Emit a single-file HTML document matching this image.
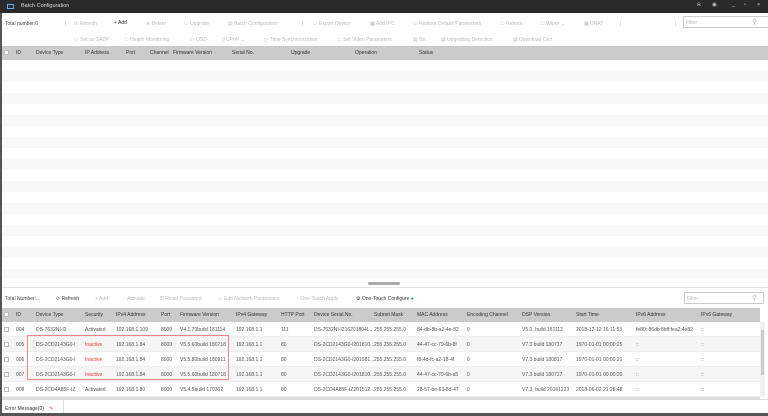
<!DOCTYPE html>
<html><head><meta charset="utf-8"><style>
*{margin:0;padding:0;box-sizing:border-box}
body{width:768px;height:416px;overflow:hidden;background:#fff;font-family:"Liberation Sans",sans-serif;font-size:5px;color:#444;position:relative}
.a{position:absolute;white-space:nowrap}
.g{color:#bbb}
.title{left:0;top:0;width:768px;height:13px;background:#2a2a2a;color:#ddd;font-size:5.5px}
.hdr{background:#cbcbcb;height:14px}
.cb{position:absolute;width:5px;height:5px;border:1px solid #bbb;background:#fff}
</style></head><body>
<div class="a title"><div class="a" style="left:7px;top:4px;width:7px;height:5px;border:1px solid #6af"></div><span class="a" style="left:21px;top:3px">Batch Configuration</span>
<span class="a" style="left:697px;top:2px;color:#ccc">⍾</span><span class="a" style="left:712px;top:2px;color:#ccc">◉</span><span class="a" style="left:732px;top:2px;color:#ccc">_</span><span class="a" style="left:744px;top:2px;color:#ccc">▫</span><span class="a" style="left:757px;top:2px;color:#ccc">×</span></div>
<div class="a" style="left:0;top:13px;width:2px;height:403px;background:#555"></div>
<span class="a" style="left:5px;top:21px">Total number:0</span>
<span class="a g" style="left:65px;top:21px">|</span>
<span class="a g" style="left:74px;top:21px">⟳ Refresh</span>
<span class="a" style="left:114px;top:20px;color:#333">+ Add</span>
<span class="a g" style="left:146px;top:21px">✕ Delete</span>
<span class="a g" style="left:184px;top:21px">▭ Upgrade</span>
<span class="a g" style="left:228px;top:21px">▤ Batch Configuration</span>
<span class="a g" style="left:302px;top:21px">|</span>
<span class="a g" style="left:313px;top:21px">▭ Export Device</span>
<span class="a g" style="left:370px;top:21px">▦ Add IPC</span>
<span class="a g" style="left:413px;top:21px">▭ Restore Default Parameters</span>
<span class="a g" style="left:500px;top:21px">▭ Reboot</span>
<span class="a g" style="left:540px;top:21px">▭ Wiper ⌄</span>
<span class="a g" style="left:584px;top:21px">▦ DNAT</span>
<span class="a g" style="left:620px;top:21px">|</span><span class="a g" style="left:675px;top:21px">|</span>
<div class="a" style="left:683px;top:16px;width:96px;height:12px;border:1px solid #ccc"></div>
<span class="a g" style="left:686px;top:20px">Filter</span><span class="a g" style="left:752px;top:18px;font-size:7px">⚲</span>
<span class="a g" style="left:74px;top:37px">▭ Set as SADP</span>
<span class="a g" style="left:124px;top:37px">▭ Health Monitoring</span>
<span class="a g" style="left:190px;top:37px">▭ OSD</span>
<span class="a g" style="left:222px;top:37px">▯ UPnP ⌄</span>
<span class="a g" style="left:264px;top:37px">◷ Time Synchronization</span>
<span class="a g" style="left:337px;top:37px">▭ Set Video Parameters</span>
<span class="a g" style="left:413px;top:37px">▤ 8ix</span>
<span class="a g" style="left:441px;top:37px">▤ Upgrading Detection</span>
<span class="a g" style="left:513px;top:37px">▤ Download Cert</span>
<div class="a hdr" style="left:2px;top:46px;width:766px"></div>
<div class="cb" style="left:4px;top:50px"></div>
<div class="a" style="top:50px;left:0;width:768px;color:#333">
<span class="a" style="left:16px">ID</span><span class="a" style="left:36px">Device Type</span><span class="a" style="left:85px">IP Address</span><span class="a" style="left:126px">Port</span><span class="a" style="left:150px">Channel</span><span class="a" style="left:173px">Firmware Version</span><span class="a" style="left:232px">Serial No.</span><span class="a" style="left:291px">Upgrade</span><span class="a" style="left:355px">Operation</span><span class="a" style="left:419px">Status</span></div>
<div class="a" style="left:2px;top:60px;width:766px;height:218px;background:repeating-linear-gradient(#fff 0 11px,#f8f8f8 11px 22px)"></div>
<div class="a" style="left:368px;top:282px;width:32px;height:3px;border-radius:2px;background:#aaa"></div>
<div class="a" style="left:2px;top:287px;width:766px;height:1px;background:#e4e4e4"></div>
<span class="a" style="left:5px;top:296px">Total Number:...</span>
<span class="a" style="left:56px;top:296px;color:#333"><span style="color:#579">⟳</span> Refresh</span>
<span class="a g" style="left:95px;top:296px">+ Add</span>
<span class="a g" style="left:123px;top:296px">◌ Activate</span>
<span class="a g" style="left:160px;top:296px">⚿ Reset Password</span>
<span class="a g" style="left:218px;top:296px">▭ Edit Network Parameters</span>
<span class="a g" style="left:296px;top:296px">◌ One-Touch Apply</span>
<span class="a" style="left:356px;top:296px;color:#333">⚙ One-Touch Configure <span style="color:#2a7fd4">●</span></span>
<div class="a" style="left:684px;top:292px;width:80px;height:12px;border:1px solid #ccc"></div>
<span class="a g" style="left:687px;top:296px">Filter</span><span class="a g" style="left:752px;top:294px;font-size:7px">⚲</span>
<div class="a hdr" style="left:2px;top:308px;width:758px"></div>
<div class="cb" style="left:4px;top:312px"></div>
<div class="a" style="top:312px;left:0;width:768px;color:#333">
<span class="a" style="left:16px">ID</span><span class="a" style="left:36px">Device Type</span><span class="a" style="left:85px">Security</span><span class="a" style="left:116px">IPv4 Address</span><span class="a" style="left:161px">Port</span><span class="a" style="left:180px">Firmware Version</span><span class="a" style="left:236px">IPv4 Gateway</span><span class="a" style="left:281px">HTTP Port</span><span class="a" style="left:314px">Device Serial No.</span><span class="a" style="left:374px">Subnet Mask</span><span class="a" style="left:417px">MAC Address</span><span class="a" style="left:467px">Encoding Channel</span><span class="a" style="left:522px">DSP Version</span><span class="a" style="left:576px">Start Time</span><span class="a" style="left:636px">IPv6 Address</span><span class="a" style="left:701px">IPv6 Gateway</span></div>
<div class="a" style="left:760px;top:322px;width:5px;height:75px;background:#f0f0f0"></div>
<div class="a" style="left:761px;top:330px;width:3px;height:45px;background:#ccc"></div>
<div class="a" style="left:0;top:322px;width:760px;height:75px;overflow:hidden"><div id="rows" class="a" style="left:0;top:0;width:760px;color:#555"></div></div>
<div class="a" style="left:2px;top:397px;width:758px;height:2px;background:#ddd"></div>
<div class="a" style="left:27px;top:335px;width:202px;height:45px;border:1px solid #e88"></div>
<div class="a" style="left:2px;top:399px;width:766px;height:1px;background:#ddd"></div>
<div class="a" style="left:2px;top:400px;width:62px;height:16px;border-right:1px solid #ddd"></div>
<span class="a" style="left:5px;top:406px;color:#333">Error Message(0) <span style="color:#e44;margin-left:4px">✎</span></span>
<div class="a" style="left:0;top:413px;width:768px;height:3px;background:#555"></div>
<script>
var d=[["004","DS-7632NI-I2","Activated","192.168.1.109","8000","V4.1.70build 181114","192.168.1.1","111","DS-7632NI-I216201804I...","255.255.255.0","84-db-8b-a2-4e-82","0","V5.0, build 181112","2018-12-12 16:11:53","fe80::86db:8bff:fea2:4e82","::"],
["005","DS-2CD2143G0-I","Inactive","192.168.1.84","8000","V5.5.60build 180718","192.168.1.1","80","DS-2CD2143G0-I201810...","255.255.255.0","44-47-cc-79-6b-8f","0","V7.3 build 180717","1970-01-01 00:00:25","::","::"],
["006","DS-2CD2143G0-I","Inactive","192.168.1.84","8000","V5.5.80build 180911","192.168.1.1","80","DS-2CD2143G0-I201981...","255.255.255.0","f8-4d-fc-a2-18-4f","0","V7.3 build 180817","1970-01-01 00:00:21","::","::"],
["007","DS-2CD2143G0-I","Inactive","192.168.1.84","8000","V5.5.60build 180718","192.168.1.1","80","DS-2CD2143G0-I201810...","255.255.255.0","44-47-cc-79-6b-a5","0","V7.3 build 180717","1970-01-01 00:00:20","::","::"],
["008","DS-2CD4A85F-IZ","Activated","192.168.1.80","8000","V5.4.5build 170302","192.168.1.1","80","DS-2CD4A85F-IZ201512...","255.255.255.0","28-57-be-63-8d-47","0","V7.3, build 20161223","2018-06-02 21:28:48","::","::"],
["009","DS-2CD2T45FWD-I","Activated","192.168.1.83","8000","V5.5.0build 161115","192.168.1.1","80","DS-2CD2T45FWD-I201611...","255.255.255.0","c0-56-e3-f3-41-25","1","V7.0 build 161026","2018-01-21 05:33:40","::","::"]];
var x=[16,36,85,116,161,180,236,281,314,374,417,467,522,576,636,701],h="";
d.forEach(function(r,i){var t=i*15;h+='<div class="a" style="left:2px;top:'+t+'px;width:758px;height:15px;background:'+(i%2?'#f5f5f5':'#fff')+';border-bottom:1px solid #eee"></div><div class="cb" style="left:4px;top:'+(t+5)+'px"></div>';
r.forEach(function(c,j){h+='<span class="a" style="left:'+x[j]+'px;top:'+(t+5)+'px'+(c=="Inactive"?';color:#e33':'')+'">'+c+'</span>';});});
document.getElementById('rows').innerHTML=h;
</script>
</body></html>
